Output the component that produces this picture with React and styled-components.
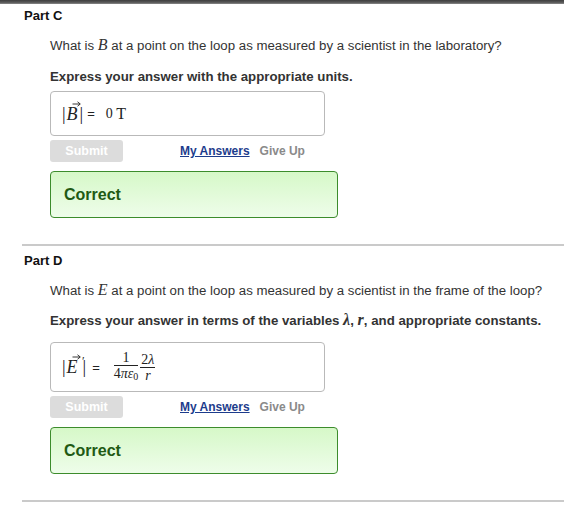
import React from 'react';
import styled, { createGlobalStyle } from 'styled-components';

const GlobalStyle = createGlobalStyle`
  html, body {
    margin: 0;
    padding: 0;
    background: #fff;
  }
  body {
    font-family: "Liberation Sans", Arial, sans-serif;
    color: #333;
  }
`;

const Page = styled.div`
  width: 564px;
  height: 506px;
  overflow: hidden;
  background: #fff;
`;

const TopBar = styled.div`
  height: 4px;
  background: linear-gradient(#3e3e3e, #5a5a5a 60%, #8a8a8a);
`;

const Part = styled.section`
  padding: 0 0 0 22px;
`;

const Spacer = styled.div`
  height: ${p => p.$h}px;
`;

const Divider = styled.div`
  margin-left: 22px;
  height: 2px;
  background: #cacaca;
`;

const PartTitle = styled.h2`
  margin: 0;
  padding: 0 0 0 2px;
  font-size: 13px;
  font-weight: bold;
  color: #111;
  line-height: 15px;
  padding-top: ${p => p.$top}px;
`;

const Body = styled.div`
  padding-left: 28px;
`;

const Question = styled.p`
  margin: 0;
  font-size: 13.25px;
  line-height: 15px;
  color: #333;
  white-space: nowrap;
  padding-top: ${p => p.$top}px;
`;

const Instruction = styled.p`
  margin: 0;
  font-size: 13.25px;
  font-weight: bold;
  line-height: 15px;
  color: #333;
  white-space: nowrap;
  padding-top: ${p => p.$top}px;
`;

const MathVar = styled.span`
  font-family: "Liberation Serif", "Times New Roman", serif;
  font-style: italic;
  font-size: ${p => p.$size || 16}px;
`;

const MathRoman = styled.span`
  font-family: "Liberation Serif", "Times New Roman", serif;
  font-size: ${p => p.$size || 14}px;
`;

const AnswerBox = styled.div`
  box-sizing: border-box;
  width: 275px;
  height: ${p => p.$h}px;
  margin-top: ${p => p.$top}px;
  border: 1px solid #b9b9b9;
  border-radius: 4px;
  display: flex;
  align-items: center;
  padding-left: 11px;
  color: #222;
`;

const Abs = styled.span`
  display: inline-flex;
  align-items: center;
  font-family: "Liberation Serif", "Times New Roman", serif;
  font-size: 18px;
  line-height: 20px;
`;

const VecWrap = styled.span`
  position: relative;
  display: inline-block;
  font-family: "Liberation Serif", "Times New Roman", serif;
  font-style: italic;
  font-size: 18px;
  padding: 0 ${p => (p.$prime ? 5 : 2)}px 0 1px;
`;

const VecArrow = styled.svg`
  position: absolute;
  left: 6px;
  top: -3px;
  width: 9px;
  height: 6px;
`;

const Prime = styled.span`
  position: absolute;
  right: -2px;
  top: -6px;
  font-style: normal;
  font-size: 12px;
`;

const Equals = styled.span`
  font-family: "Liberation Sans", Arial, sans-serif;
  font-size: 13px;
  margin: 0 ${p => p.$gap || 10}px 0 ${p => p.$lead || 4}px;
`;

const Frac = styled.span`
  display: inline-flex;
  flex-direction: column;
  align-items: center;
  margin-right: 2px;
  font-family: "Liberation Serif", "Times New Roman", serif;
  font-size: 14px;
  line-height: 13px;
`;

const Num = styled.span`
  border-bottom: 1px solid #222;
  padding: 0 1px 1px;
  align-self: stretch;
  text-align: center;
`;

const Den = styled.span`
  padding-top: 1px;
`;

const Sub = styled.sub`
  font-size: 10px;
  font-style: normal;
  vertical-align: -2px;
`;

const Actions = styled.div`
  display: flex;
  align-items: center;
  margin-top: 4px;
  height: 22px;
`;

const SubmitButton = styled.button`
  box-sizing: border-box;
  width: 73px;
  height: 22px;
  border: none;
  border-radius: 3px;
  background: #dcdcdc;
  color: #fff;
  font-family: "Liberation Sans", Arial, sans-serif;
  font-size: 12.5px;
  font-weight: bold;
  padding: 0;
  margin-right: 57px;
`;

const LinkButton = styled.a`
  font-size: 12px;
  font-weight: bold;
  color: ${p => (p.$muted ? '#8a8a8a' : '#1d3c8c')};
  text-decoration: ${p => (p.$muted ? 'none' : 'underline')};
  margin-right: 10px;
  cursor: pointer;
`;

const Correct = styled.div`
  box-sizing: border-box;
  width: 288px;
  height: 47px;
  margin-top: 9px;
  border: 1px solid #3c8c2c;
  border-radius: 4px;
  background: linear-gradient(#d6f8c8, #eefdea);
  display: flex;
  align-items: center;
  padding-left: 13px;
  font-size: 16px;
  font-weight: bold;
  color: #1f5a14;
`;

const Vec = ({ letter, prime }) => (
  <VecWrap $prime={prime}>
    <VecArrow viewBox="0 0 9 6">
      <path d="M0.5 3 H8 M5.5 0.8 L8.3 3 L5.5 5.2" fill="none" stroke="#222" strokeWidth="0.9" />
    </VecArrow>
    {letter}
    {prime && <Prime>&#8242;</Prime>}
  </VecWrap>
);

const Buttons = () => (
  <Actions>
    <SubmitButton disabled>Submit</SubmitButton>
    <LinkButton>My Answers</LinkButton>
    <LinkButton $muted>Give Up</LinkButton>
  </Actions>
);

export default function App() {
  return (
    <Page>
      <GlobalStyle />
      <TopBar />
      <Part>
        <PartTitle $top={4}>Part C</PartTitle>
        <Body>
          <Question $top={14}>
            What is <MathVar>B</MathVar> at a point on the loop as measured by a scientist in the laboratory?
          </Question>
          <Instruction $top={16}>Express your answer with the appropriate units.</Instruction>
          <AnswerBox $h={45} $top={7}>
            <Abs>
              |<Vec letter="B" />|
            </Abs>
            <Equals $gap={11}>=</Equals>
            <MathRoman $size={14}>0&nbsp;</MathRoman>
            <MathRoman $size={16}>T</MathRoman>
          </AnswerBox>
          <Buttons />
          <Correct>Correct</Correct>
        </Body>
      </Part>
      <Spacer $h={26} />
      <Divider />
      <Part>
        <PartTitle $top={7}>Part D</PartTitle>
        <Body>
          <Question $top={14}>
            What is <MathVar>E</MathVar> at a point on the loop as measured by a scientist in the frame of the loop?
          </Question>
          <Instruction $top={14}>
            Express your answer in terms of the variables <MathVar>&lambda;</MathVar>, <MathVar>r</MathVar>, and appropriate constants.
          </Instruction>
          <AnswerBox $h={50} $top={14}>
            <Abs>
              |<Vec letter="E" prime />|
            </Abs>
            <Equals $gap={14} $lead={6}>=</Equals>
            <Frac>
              <Num>1</Num>
              <Den>
                4<i>&pi;</i>
                <i>&epsilon;</i>
                <Sub>0</Sub>
              </Den>
            </Frac>
            <Frac>
              <Num>
                2<i>&lambda;</i>
              </Num>
              <Den>
                <i>r</i>
              </Den>
            </Frac>
          </AnswerBox>
          <Buttons />
          <Correct>Correct</Correct>
        </Body>
      </Part>
      <Spacer $h={26} />
      <Divider />
    </Page>
  );
}
